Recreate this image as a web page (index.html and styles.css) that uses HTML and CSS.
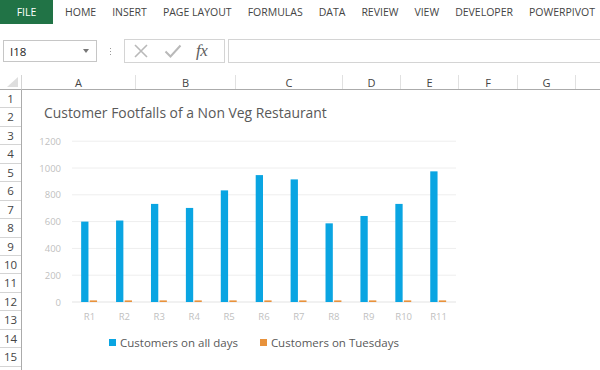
FILE: index.html
```html
<!DOCTYPE html>
<html lang="en">
<head>
    <meta charset="UTF-8">
    <title>Customer Footfalls - Excel</title>
    <link rel="stylesheet" href="styles.css">
</head>
<body>
    <div class="ribbon">
        <div class="tab file">FILE</div>
        <div class="tab">HOME</div>
        <div class="tab">INSERT</div>
        <div class="tab">PAGE LAYOUT</div>
        <div class="tab">FORMULAS</div>
        <div class="tab">DATA</div>
        <div class="tab">REVIEW</div>
        <div class="tab">VIEW</div>
        <div class="tab">DEVELOPER</div>
        <div class="tab">POWERPIVOT</div>
    </div>

    <div class="formula-bar">
        <div class="name-box">
            <span>I18</span>
            <span class="caret"></span>
        </div>
        <div class="grip"><i></i><i></i><i></i></div>
        <div class="fx-box">
            <svg width="16" height="16" viewBox="0 0 16 16">
                <path d="M2 2 L14 14 M14 2 L2 14" stroke="#b9b9b9" stroke-width="1.6" fill="none"/>
            </svg>
            <svg width="18" height="16" viewBox="0 0 18 16">
                <path d="M1.5 8.5 L6.5 13.5 L16.5 2.5" stroke="#b9b9b9" stroke-width="2" fill="none"/>
            </svg>
            <span class="fx">fx</span>
        </div>
        <div class="formula-input"></div>
    </div>

    <div class="sheet">
        <div class="corner"><span class="corner-tri"></span></div>
        <div class="col-heads">
            <div class="col-head w-a">A</div>
            <div class="col-head w-b">B</div>
            <div class="col-head w-c">C</div>
            <div class="col-head w-d">D</div>
            <div class="col-head w-e">E</div>
            <div class="col-head w-f">F</div>
            <div class="col-head w-g">G</div>
            <div class="col-head w-h"></div>
        </div>
        <div class="row-heads">
            <div class="row-head">1</div>
            <div class="row-head">2</div>
            <div class="row-head">3</div>
            <div class="row-head">4</div>
            <div class="row-head">5</div>
            <div class="row-head">6</div>
            <div class="row-head">7</div>
            <div class="row-head">8</div>
            <div class="row-head">9</div>
            <div class="row-head">10</div>
            <div class="row-head">11</div>
            <div class="row-head">12</div>
            <div class="row-head">13</div>
            <div class="row-head">14</div>
            <div class="row-head">15</div>
            <div class="row-head"></div>
        </div>
        <div class="cells">
            <div class="chart">
                <div class="chart-title">Customer Footfalls of a Non Veg Restaurant</div>
                <svg class="plot" id="plot" width="448" height="200" viewBox="0 0 448 200"></svg>
                <div class="legend">
                    <div class="legend-item"><span class="swatch all"></span>Customers on all days</div>
                    <div class="legend-item"><span class="swatch tue"></span>Customers on Tuesdays</div>
                </div>
            </div>
        </div>
    </div>

    <script>
        // plot is drawn in svg units: x is page x - 22, y is page y - 130
        var allDays = [600, 608, 732, 702, 833, 947, 915, 587, 642, 732, 975];
        var tuesdays = [12, 12, 12, 12, 12, 12, 12, 12, 12, 12, 12];
        var svg = document.getElementById('plot');
        var ns = 'http://www.w3.org/2000/svg';
        var left = 51, right = 435, zero = 173, step = 26.8;
        var band = (right - left) / allDays.length;

        function add(tag, attrs, text) {
            var el = document.createElementNS(ns, tag);
            for (var k in attrs) el.setAttribute(k, attrs[k]);
            if (text) el.textContent = text;
            svg.appendChild(el);
            return el;
        }

        for (var i = 0; i <= 6; i++) {
            var y = zero - i * step;
            add('line', { x1: left, x2: right, y1: y, y2: y, stroke: i === 0 ? '#e3e3e3' : '#eeeeee', 'stroke-width': 1 });
            add('text', { x: 40, y: y + 3.5, 'class': 'axis-label', 'text-anchor': 'end' }, String(i * 200));
        }

        allDays.forEach(function(v, i) {
            var c = left + band * (i + 0.5);
            var h = v * step / 200;
            add('rect', { x: c - 8.3, y: zero - h, width: 7.3, height: h, fill: '#0aa5e2' });
            var t = tuesdays[i] * step / 200;
            add('rect', { x: c + 0.3, y: zero - t, width: 7.3, height: t, fill: '#e8923c' });
            add('text', { x: c, y: 191, 'class': 'axis-label', 'text-anchor': 'middle' }, 'R' + (i + 1));
        });
    </script>
</body>
</html>
```

FILE: styles.css
```css
body {
    margin: 0;
    width: 600px;
    height: 370px;
    overflow: hidden;
    background-color: #ffffff;
    font-family: "Open Sans", "Noto Sans", sans-serif;
    color: #444444;
}
.ribbon {
    display: flex;
    align-items: center;
    height: 24px;
    gap: 16px;
}
.tab {
    font-size: 10.5px;
    color: #444444;
    white-space: nowrap;
}
.tab.file {
    background-color: #217346;
    color: #ffffff;
    width: 53px;
    height: 24px;
    line-height: 24px;
    text-align: center;
    margin-right: -4px;
}
.formula-bar {
    display: flex;
    align-items: center;
    height: 24px;
    margin-top: 15px;
    padding-left: 3px;
}
.name-box {
    height: 22px;
    border: 1px solid #c6c6c6;
    display: flex;
    align-items: center;
    justify-content: space-between;
    padding: 0 7px 0 6px;
    box-sizing: border-box;
    width: 94px;
    font-size: 11.5px;
    color: #222222;
}
.caret {
    width: 0;
    height: 0;
    border-left: 3.5px solid transparent;
    border-right: 3.5px solid transparent;
    border-top: 4px solid #777777;
}
.grip {
    width: 27px;
    display: flex;
    flex-direction: column;
    align-items: center;
    gap: 2px;
}
.grip i {
    display: block;
    width: 1px;
    height: 1px;
    background-color: #9a9a9a;
}
.fx-box {
    width: 101px;
    height: 24px;
    box-sizing: border-box;
    border: 1px solid #d4d4d4;
    display: flex;
    align-items: center;
    padding-left: 8px;
    gap: 15px;
}
.fx {
    font-family: "Liberation Serif", serif;
    font-style: italic;
    font-size: 17px;
    color: #5e5e5e;
    margin-left: -1px;
    letter-spacing: -0.5px;
}
.formula-input {
    flex: 1;
    height: 24px;
    box-sizing: border-box;
    margin-left: 3px;
    border: 1px solid #d4d4d4;
    border-right: none;
}
.sheet {
    display: grid;
    grid-template-columns: 22px 1fr;
    grid-template-rows: 15px auto;
    margin-top: 12px;
}
.corner {
    border-right: 1px solid #d4d4d4;
    border-bottom: 1px solid #ababab;
    position: relative;
}
.corner-tri {
    position: absolute;
    right: 3px;
    bottom: 2px;
    width: 0;
    height: 0;
    border-left: 11px solid transparent;
    border-bottom: 10px solid #dedede;
}
.col-heads {
    display: flex;
    border-bottom: 1px solid #ababab;
}
.col-head {
    flex: none;
    font-size: 11px;
    line-height: 15px;
    text-align: center;
    border-right: 1px solid #e1e1e1;
    box-sizing: border-box;
}
.w-a { width: 114px; }
.w-b { width: 100px; }
.w-c { width: 107px; }
.w-d { width: 58px; }
.w-e { width: 58px; }
.w-f { width: 59px; }
.w-g { width: 58px; }
.w-h { flex: 1; border-right: none; }
.row-heads {
    display: flex;
    flex-direction: column;
    border-right: 1px solid #ababab;
}
.row-head {
    height: 18.45px;
    box-sizing: border-box;
    border-bottom: 1px solid #d4d4d4;
    font-size: 11.5px;
    line-height: 18px;
    text-align: center;
    color: #444444;
}
.cells {
    position: relative;
}
.chart {
    position: absolute;
    left: 0;
    top: 0;
    width: 448px;
    height: 276px;
    background-color: #ffffff;
}
.chart-title {
    font-size: 13.9px;
    color: #595959;
    padding: 14px 0 0 22px;
    line-height: 18px;
}
.plot {
    display: block;
    margin-left: -1px;
    margin-top: 7px;
}
.axis-label {
    font-family: "Open Sans", "Noto Sans", sans-serif;
    font-size: 9.5px;
    fill: #bfbfbf;
}
.legend {
    display: flex;
    gap: 22px;
    padding-left: 87px;
    margin-top: 6px;
    font-size: 11.5px;
    color: #595959;
}
.legend-item {
    display: flex;
    align-items: center;
    gap: 4px;
}
.swatch {
    width: 7px;
    height: 7px;
}
.swatch.all { background-color: #0aa5e2; }
.swatch.tue { background-color: #e8923c; }
```
